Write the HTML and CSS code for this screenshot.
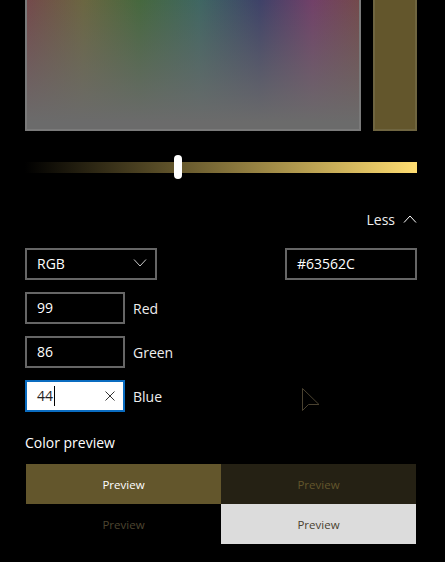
FILE: index.html
```html
<!DOCTYPE html>
<html lang="en">
  <head>
    <title>Color picker</title>
    <link rel="stylesheet" href="styles.css">
  </head>
  <body>
    <!-- Spectrum and value strip -->
    <div class="picker">
      <div class="spectrum"></div>
      <div class="strip"></div>
    </div>

    <!-- Value slider -->
    <div class="slider">
      <div class="slider-thumb"></div>
    </div>

    <div class="less">
      <span>Less</span>
      <svg class="less-icon" width="14" height="8" viewBox="0 0 14 8">
        <path d="M1 7.5 L7 1 L13 7.5" fill="none" stroke="#fff" stroke-width="1"/>
      </svg>
    </div>

    <div class="mode-row">
      <div class="field mode-select">
        <span>RGB</span>
        <svg width="14" height="8" viewBox="0 0 14 8">
          <path d="M1 0.5 L7 7 L13 0.5" fill="none" stroke="#ccc" stroke-width="1"/>
        </svg>
      </div>
      <div class="field hex-field">#63562C</div>
    </div>

    <div class="channel-row">
      <div class="field channel-field">99</div>
      <span class="channel-label">Red</span>
    </div>
    <div class="channel-row">
      <div class="field channel-field">86</div>
      <span class="channel-label">Green</span>
    </div>
    <div class="channel-row">
      <div class="field channel-field focused">
        <span class="typed">44</span>
        <svg class="clear-icon" width="10" height="10" viewBox="0 0 10 10">
          <path d="M0.5 0.5 L9.5 9.5 M9.5 0.5 L0.5 9.5" fill="none" stroke="#333" stroke-width="1"/>
        </svg>
      </div>
      <span class="channel-label">Blue</span>
    </div>

    <p class="preview-title">Color preview</p>
    <div class="preview-grid">
      <div class="preview preview-accent">Preview</div>
      <div class="preview preview-dim">Preview</div>
      <div class="preview preview-black">Preview</div>
      <div class="preview preview-light">Preview</div>
    </div>

    <!-- Mouse pointer -->
    <svg class="pointer" width="20" height="26" viewBox="0 0 20 26">
      <path d="M1.5 1.5 V23.5 L7.5 17.5 H18 Z" fill="#000" stroke="#4a4230" stroke-width="1"/>
    </svg>
  </body>
</html>
```

FILE: styles.css
```css
body {
  margin: 0;
  padding: 0 28px 0 25px;
  background-color: black;
  color: white;
  font-family: "Open Sans", "Noto Sans", sans-serif;
  font-size: 14px;
}
.picker {
  display: flex;
  gap: 12px;
  height: 131px;
}
.spectrum {
  flex: 1;
  box-sizing: border-box;
  border: 2px solid #7a7a7a;
  border-top: none;
  background-image:
    linear-gradient(to bottom, rgba(107, 107, 107, 0.05) 0%, rgba(107, 107, 107, 0.5) 45%, #6b6b6b 95%),
    linear-gradient(to right, #74484a 0%, #6b663f 17%, #44683c 34%, #3d6662 52%, #3c4068 70%, #723e68 86%, #74484a 100%);
}
.strip {
  box-sizing: border-box;
  width: 44px;
  border: 2px solid #6f6540;
  border-top: none;
  background-color: #63562c;
}
.slider {
  position: relative;
  height: 11px;
  margin-top: 31px;
  background: linear-gradient(to right, #000 0%, #ffdd71 100%);
}
.slider-thumb {
  position: absolute;
  left: 149px;
  top: -7px;
  width: 8px;
  height: 24px;
  border-radius: 4px;
  background-color: white;
}
.less {
  display: flex;
  justify-content: flex-end;
  align-items: center;
  gap: 8px;
  height: 20px;
  margin-top: 36px;
  color: #eee;
}
.mode-row {
  display: flex;
  justify-content: space-between;
  margin-top: 19px;
}
.field {
  box-sizing: border-box;
  display: flex;
  align-items: center;
  height: 32px;
  padding: 0 8px 2px 10px;
  border: 2px solid #666;
}
.mode-select {
  justify-content: space-between;
  width: 132px;
}
.hex-field {
  width: 132px;
}
.channel-row {
  display: flex;
  align-items: center;
  gap: 8px;
  margin-top: 12px;
}
.channel-field {
  width: 100px;
}
.channel-label {
  color: #eee;
}
.focused {
  justify-content: space-between;
  padding-bottom: 0;
  border-color: #0a6cc0;
  background-color: white;
  color: #222;
}
.typed {
  border-right: 1px solid black;
  padding-right: 1px;
  line-height: 20px;
}
.preview-title {
  margin: 20px 0 0 0;
  line-height: 22px;
}
.preview-grid {
  display: grid;
  grid-template-columns: 195px 195px;
  grid-auto-rows: 40px;
  margin: 10px 0 0 1px;
}
.preview {
  display: flex;
  align-items: center;
  justify-content: center;
  font-size: 11.5px;
}
.preview-accent {
  background-color: #63562c;
  color: white;
}
.preview-dim {
  background-color: #252114;
  color: #63562c;
}
.preview-black {
  background-color: black;
  color: #4d4530;
}
.preview-light {
  background-color: #dcdcdc;
  color: #4a4230;
}
.pointer {
  position: absolute;
  left: 301px;
  top: 387px;
}
```
